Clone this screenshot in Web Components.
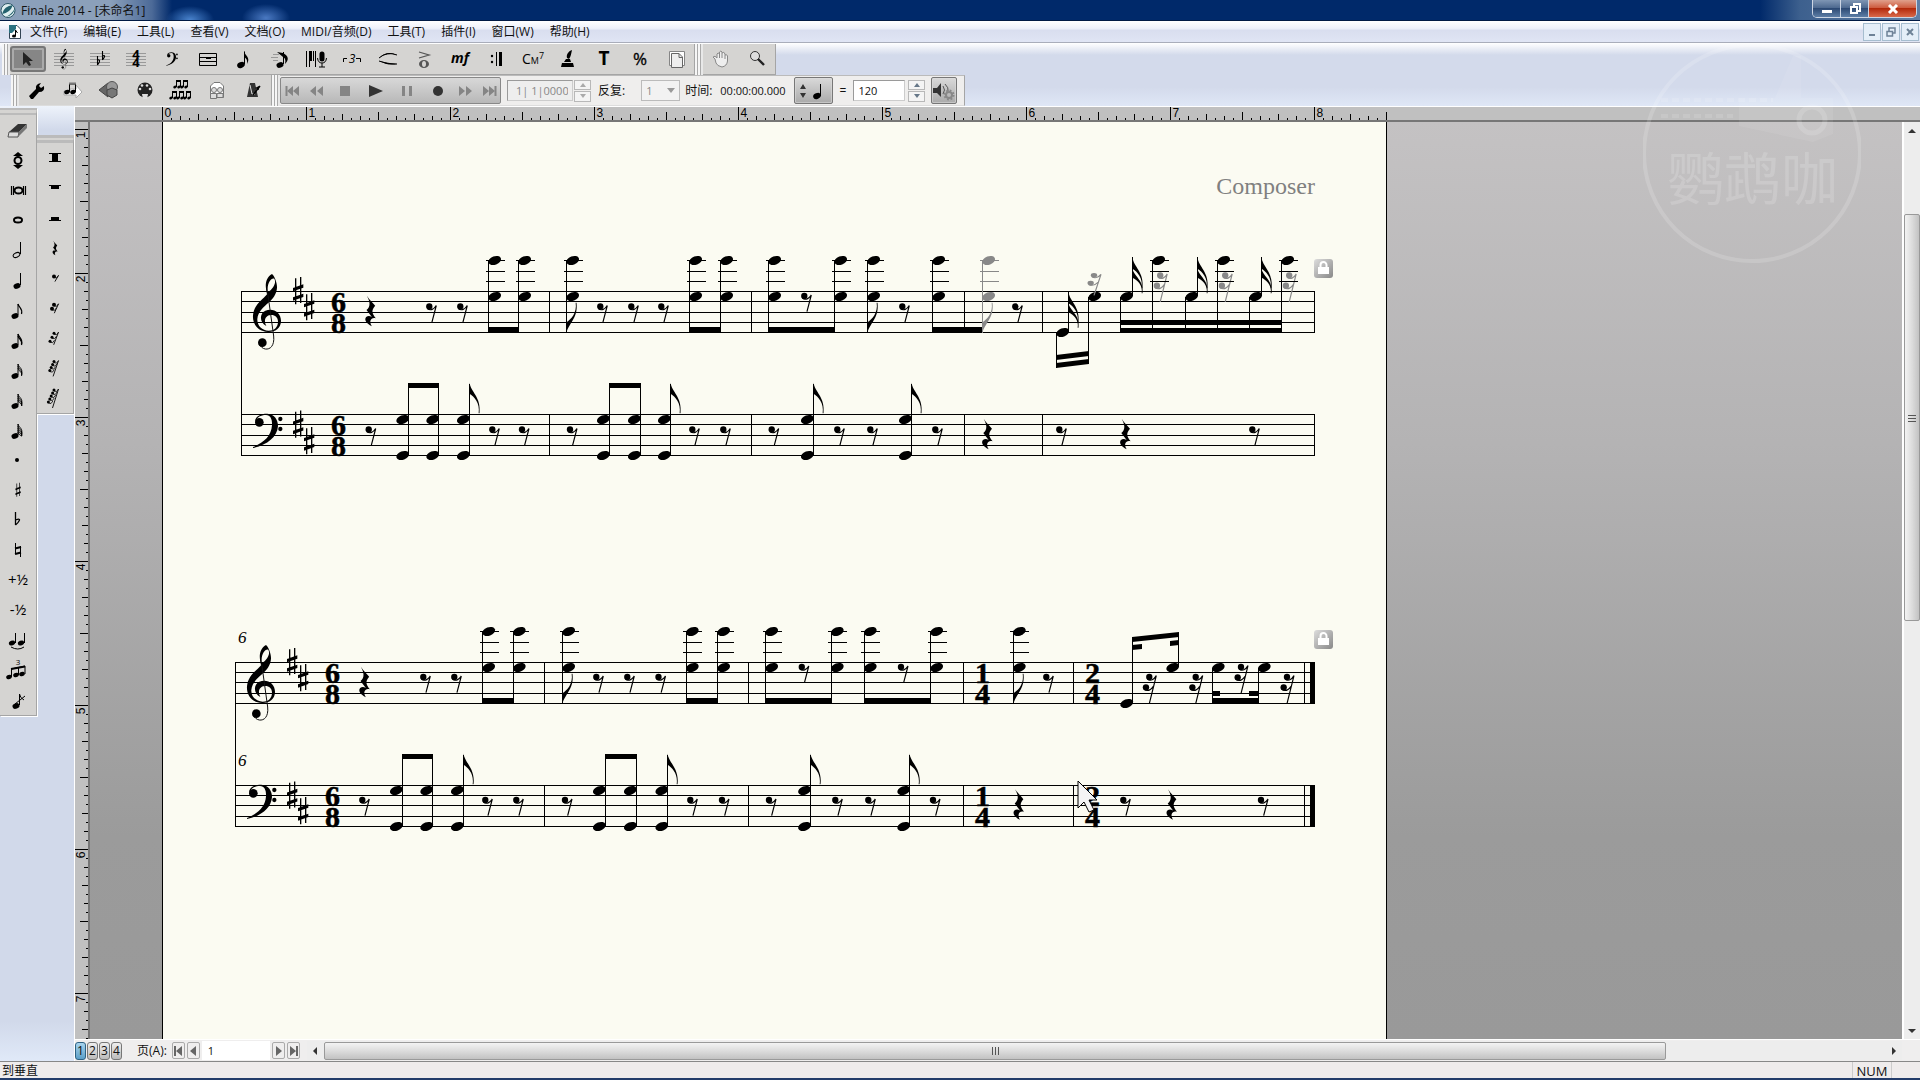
<!DOCTYPE html>
<html lang="zh-CN">
<head>
<meta charset="utf-8">
<title>Finale 2014 - [未命名1]</title>
<style>
html,body{margin:0;height:100%}
body{font:12px/16px "Open Sans","Noto Sans CJK SC",sans-serif;color:#111;overflow:hidden;background:#d3daeb}
</style>
</head>
<body>
<finale-app></finale-app>
<script>
/* ---------- helper ---------- */
function define(name, css, html) {
  customElements.define(name, class extends HTMLElement {
    connectedCallback() {
      if (this.shadowRoot) return;
      const t = document.createElement('template');
      t.innerHTML = '<style>*{box-sizing:border-box}button,input,select{font:inherit;color:inherit;margin:0;padding:0;border:0;background:none}svg{display:block;flex:none}' + css + '</style>' +
        (typeof html === 'function' ? html(this) : html);
      this.attachShadow({ mode: 'open' }).append(t.content.cloneNode(true));
    }
  });
}

/* ---------- music glyph shapes (three units per pixel) ---------- */
const TREBLE = '<path fill-rule="evenodd" d="M139 258C120 250 116 222 136 212C160 202 184 218 183 244C182 266 164 277 144 276C114 275 97 252 99 226C101 205 112 190 128 176C134 171 138 167 141 163C135 140 134 115 156 102C162 106 172 128 171 143C170 162 158 177 147 187C130 202 114 215 112 237C111 257 126 271 146 272C162 272 174 262 174 245C174 231 164 224 152 225C136 226 130 242 139 258ZM144 157C160 146 170 128 163 116C153 112 139 132 144 157Z"/><path fill="none" stroke="currentColor" stroke-width="3" d="M143 158L161 288C164 318 150 329 136 327C128 326 122 320 118 313"/><circle cx="127" cy="308" r="13"/>';
const BASS = '<path d="M106 546C104 530 120 521 142 521C164 522 174 540 174 558C172 592 140 615 99 624L99 621C132 608 154 588 156 556C157 538 152 526 138 525C122 525 110 533 110 540Z"/><circle cx="118" cy="547" r="13"/><circle cx="181" cy="537" r="6.500"/><circle cx="181" cy="567" r="6.500"/>';
const QREST = '<path d="M-11 -46C-2 -32 8 -24 14 -16C2 -2 4 6 16 22C2 18 -6 30 4 46C-12 38 -20 26 -13 18C-8 14 -2 14 4 18L-12 -3C1 -14 -1 -28 -11 -46Z"/>';
const EREST = '<circle r="9.500"/><path fill="none" stroke="currentColor" stroke-width="3.500" d="M-6 6C4 14 14 8 21 -3L8 47"/>';
const SREST = '<circle r="9.500"/><circle cx="-10" cy="31" r="9.500"/><path fill="none" stroke="currentColor" stroke-width="3.500" d="M-6 6C4 14 14 8 21 -4L0 80M-16 37C-4 45 5 38 12 28"/>';
const SHARP = '<path d="M-9 -38H-5V40H-9ZM6 -42H10V36H6ZM-15 -9L16 -20V-10L-15 1ZM-15 19L16 8V18L-15 29Z"/>';
const FLAG = '<path d="M0 0C3 28 36 44 30 92H27.500C32 62 14 42 0 34Z"/>';

/* ---------- icons, 30 x 26 ---------- */
const head = (x, y, s = 1) => `<ellipse cx="${x}" cy="${y}" rx="${3.6 * s}" ry="${2.6 * s}" transform="rotate(-22 ${x} ${y})"/>`;
const L = (d, w = 1, c = 'currentColor') => `<path fill="none" stroke="${c}" stroke-width="${w}" d="${d}"/>`;
const put = (g, x, y, s, cx = 0, cy = 0) => `<g transform="translate(${x} ${y}) scale(${s}) translate(${-cx} ${-cy})">${g}</g>`;
const staff = L('M5 7.500H25M5 10.500H25M5 13.500H25M5 16.500H25M5 19.500H25', 1, '#999');
const T = (t, x, y, size, more = '') => `<text x="${x}" y="${y}" font-size="${size}" text-anchor="middle" ${more}>${t}</text>`;
const flags = n => { let s = head(12, 19) + L('M15 18V7'); for (let i = 0; i < n; i++) s += L(`M15 ${7 + i * 2}C16 ${11 + i * 2} 20 ${11 + i * 2} 18.500 ${17 + (i > 2 ? 2 : i)}`, n > 2 ? 1 : 1.2); return s; };
const rests = n => { let s = ''; for (let i = 0; i < n; i++) { const x = 18 - i * (n > 3 ? 1.4 : 2), y = 13 - n * 1.6 + i * (n > 3 ? 3 : 4); s += `<circle cx="${x - 4}" cy="${y}" r="${n > 2 ? 1.5 : 2}"/>` + L(`M${x - 4} ${y + 1}Q${x - 1} ${y + 3} ${x + .5} ${y - 1}`, .8); } return s + L(`M18.500 ${12 - n * 1.6}L${15.5 - n * .6} ${15 + n * 1.6}`, .9); };
const G = '#858585';
const ICONS = {
  arrow: '<path d="M10 6V19L13 16L16 20L18 19L16 15H20Z" fill="#222"/>',
  clef: staff + put(TREBLE, 15, 13, .09, 141, 215),
  key: staff + L('M12.500 10V19M12 14Q17 13 12.500 19M17.500 5V14M17 10Q22 8 17.500 14', 1.1),
  meter: staff + T('4', 15, 13, 13, 'font-family="Liberation Serif" font-weight="700"') + T('4', 15, 21, 13, 'font-family="Liberation Serif" font-weight="700"'),
  bass: put(BASS, 15, 13, .13, 143, 572),
  measure: L('M6.500 7.500H23.500V19.500H6.500ZM6 11.500H24M6 15.500H24') + '<path d="M13 11H18V13H13Z"/>',
  note: head(12, 19, 1.1) + L('M15.500 18V5.500') + '<path d="M15 5C16 10 22 11 18 18C19 13 16 12 15 11Z"/>',
  speedy: L('M8 8.500H14M6 11.500H13M8 14.500H13', 1, '#999') + head(15, 19) + L('M18.500 18V6', 1) + '<path d="M12 6L18 7C24 10 24 14 20 18C21 14 20 12 18 11Z"/>',
  hyper: L('M5.500 5V21M8.500 5V14M8.500 14V21M14.500 5V21') + '<path d="M9 5H11V15H9ZM12 5H13V15H12ZM18.500 8A2.500 2.500 0 0 1 23.500 8V13A2.500 2.500 0 0 1 18.500 13Z"/>' + L('M16.500 12Q17 17 21 17Q25 17 25.500 12M21 17V21M18 21H24'),
  tuplet: T('3', 15, 17, 12, 'font-family="Liberation Serif" font-style="italic"') + L('M6.500 16V12.500H10M19 12.500H23.500V16'),
  slur: '<path d="M6 12Q14 4 24 9Q14 6 6 12ZM6 15Q15 20 24 18Q15 17 6 15Z"/>' + L('M6 12Q14 5 24 9M6 15Q15 19 24 18'),
  artic: L('M10 6L20 9L10 12', 1.3, '#555') + '<path fill-rule="evenodd" fill="#555" d="M15 14A5 4 0 1 0 15 22A5 4 0 1 0 15 14ZM15 15A2 3 0 1 1 15 21A2 3 0 1 1 15 15Z"/>',
  dyn: T('mf', 15, 17, 14, 'font-family="Liberation Serif" font-style="italic" font-weight="700"'),
  repeat: L('M15.500 6V20') + '<path d="M18 6H21V20H18Z"/><circle cx="11" cy="10" r="1.200"/><circle cx="11" cy="16" r="1.200"/>',
  chord: '<text x="5" y="18" font-size="14" font-family="Open Sans">C<tspan font-size="9">M</tspan><tspan font-size="9" dy="-5">7</tspan></text>',
  lyric: '<path d="M9 17H20L21 21H8ZM13 13H17L18 16H11ZM14 12C13 8 16 5 19 4C18 8 18 10 16 13Z"/>',
  text: T('T', 15, 19, 19, 'font-family="Liberation Serif" font-weight="700"'),
  percent: T('%', 15, 19, 17, 'font-family="Liberation Serif" stroke="currentColor" stroke-width=".3"'),
  page: `<path d="M8.500 5.500H23.500V19.500H8.500Z" fill="#fff" stroke="${G}"/><path d="M10.500 7.500H18L21.500 11V21.500H10.500Z" fill="#eee" stroke="#666"/>` + L('M18 7.500V11.500H22', 1, '#666'),
  hand: '<path d="M9 13L7 11Q9 9 11 12V8Q12 6 13.500 8V6Q15 4 16 6V7Q18 5 19 8V9Q21 8 21.500 10V15Q21 20 16 21Q11 20 10 17Z" fill="#eee" stroke="#888"/>' + L('M13.500 8V12M16 7V12M19 9V13', 1, '#888'),
  zoom: '<circle cx="13" cy="10" r="4.500" fill="#ddd" stroke="#333"/>' + L('M16 13L22 19', 2.4, '#222'),
  wrench: '<path d="M9 22L7 19L14 12Q13 7 19 6L17 9L19 11L22 9Q23 15 17 15L11 22Z"/>',
  export: '<path d="M12 12H18V8L24 15L18 21V18H6V14H12Z" fill="#fff" stroke="#aaa"/>' + head(9, 15, .8) + head(15, 15, .8) + L('M11.500 15V7H17.500V15') + L('M11 6.500H18', 2, '#777'),
  shapes: '<path d="M5 13L14 6V20Z" fill="#666" stroke="#444"/><circle cx="18" cy="10" r="5.500" fill="#999" stroke="#555"/><path d="M18 11L23 13V18L18 21L13 18V13Z" fill="#777" stroke="#444"/>',
  palette: '<circle cx="15" cy="13" r="7.500" fill="#222"/><g fill="#ddd"><circle cx="10" cy="12" r="1.300"/><circle cx="12" cy="8.500" r="1.300"/><circle cx="17" cy="8.500" r="1.300"/><circle cx="20" cy="12" r="1.300"/><path d="M12 17H18L17 22H13Z"/></g>',
  notes2: [[9, 10], [16, 10], [5, 21], [12, 21], [19, 21]].map(([x, y]) => head(x, y, .5) + head(x + 4, y, .5) + L(`M${x + 1.5} ${y}V${y - 6}H${x + 5.5}V${y}`) + L(`M${x + 1} ${y - 6}H${x + 6}`, 2)).join(''),
  band: '<path d="M8.500 21.500V9L12 5.500H18L21.500 9V20.500H15" fill="#fff" stroke="#777"/><circle cx="12" cy="13" r="2.500" fill="#ddd" stroke="#777"/><circle cx="18" cy="13" r="2.500" fill="#ddd" stroke="#777"/><path d="M8.500 16.500H14.500V21.500H8.500ZM15 16.500H21V20.500H15Z" fill="#ddd" stroke="#777"/>',
  metro: '<path d="M12 6H17L20 20H9Z" fill="#333"/>' + L('M12 8L14 17H17', 1, '#ddd') + L('M15 18L22 9', 1.500) + '<path d="M17 11L21 9V13Z"/>',
  first: L('M8.500 8V18', 2, G) + `<path fill="${G}" d="M15 8V18L9 13ZM21 8V18L15 13Z"/>`,
  rew: `<path fill="${G}" d="M14 8V18L8 13ZM21 8V18L15 13Z"/>`,
  stop: `<path fill="${G}" d="M10 8H20V18H10Z"/>`,
  play: '<path fill="#333" d="M8 7L22 13L8 19Z"/>',
  pause: `<path fill="${G}" d="M10 8H13V18H10ZM17 8H20V18H17Z"/>`,
  rec: '<circle cx="15" cy="13" r="5" fill="#333"/>',
  fwd: `<path fill="${G}" d="M9 8V18L15 13ZM16 8V18L22 13Z"/>`,
  last: L('M21.500 8V18', 2, G) + `<path fill="${G}" d="M9 8V18L15 13ZM15 8V18L21 13Z"/>`,
  tempo: '<path fill="#333" d="M2 11L5 6L8 11ZM2 15L5 20L8 15Z"/>' + head(19, 18, 1.1) + L('M22.500 18V6'),
  speaker: '<path fill="#333" d="M4 10H8L12 5V19L8 15H4Z"/>' + L('M14 8Q17 12 14 16M16 6Q20 10 19 13', 1, '#555') + '<circle cx="20" cy="17" r="3" fill="none" stroke="#888" stroke-width="2"/><circle cx="20" cy="17" r="4.500" fill="none" stroke="#888" stroke-width="2" stroke-dasharray="1.800 1.740"/>',
  eraser: '<path d="M6 15L15 7H24L16 15Z" fill="#333"/><path d="M6 15H16L15 20H5Z" fill="#ddd" stroke="#555"/><path d="M16 15L24 7V11L15 20Z" fill="#777"/>',
  updown: '<path d="M10 9L15 5L20 9ZM10 18L15 22L20 18Z"/><circle cx="15" cy="13.500" r="3.500" fill="none" stroke="currentColor" stroke-width="2"/>',
  breve: L('M8.500 9V18M10.500 9V18M20.500 9V18M22.500 9V18', 1.200) + '<ellipse cx="15.500" cy="13.500" rx="4" ry="3" fill="none" stroke="currentColor" stroke-width="2"/>',
  whole: '<ellipse cx="15" cy="13" rx="4" ry="2.500" fill="none" stroke="currentColor" stroke-width="2"/>',
  half: '<ellipse cx="13.500" cy="18" rx="3.500" ry="2.200" fill="none" stroke="currentColor" transform="rotate(-25 13.500 18)"/>' + L('M17.500 17V5'),
  quarter: head(14, 19) + L('M17.500 18V6'),
  n8: flags(1), n16: flags(2), n32: flags(3), n64: flags(4), n128: flags(5),
  dot: '<circle cx="14" cy="13" r="2"/>',
  sharp: put(SHARP, 15, 13, .17),
  flat: L('M12.500 5V18M12.500 13Q18 11 16 14Q15 16 12.500 18', 1.300),
  natural: L('M12.500 6V17M17.500 9V20') + L('M12 11.500L18 10M12 17L18 15.500', 2.200),
  plus: T('+½', 15, 18, 15), minus: T('-½', 15, 18, 15),
  tie: head(9, 16, .9) + head(18, 16, .9) + L('M12.500 16V6M21.500 16V6M8 20Q15 24 21 20'),
  tri: head(6, 20, .8) + head(13, 18, .8) + head(19, 17, .8) + L('M8.500 20V12L22 9V17M15.500 18V11') + L('M8 12L22 9.500', 2) + T('3', 15, 8, 8),
  grace: head(13, 19) + L('M16.500 18V7Q17 11 21 13M12 17L22 9'),
  rbreve: L('M9 8.500H21M9 16.500H21') + '<path d="M12 8H18V17H12Z"/>',
  rwhole: L('M9 10.500H21') + '<path d="M11 11H19V14H11Z"/>',
  rhalf: L('M9 15.500H21') + '<path d="M11 12H19V15H11Z"/>',
  rq: put(QREST, 15, 13, .16),
  r8: rests(1), r16: rests(2), r32: rests(3), r64: rests(4), r128: rests(5)
};

define('tool-button', `
:host{display:flex;width:36px;height:30px}
:host([tall]){width:100%;height:30px}
:host([small]){width:24px}:host([mid]){width:31px}:host([small]),:host([mid]){height:26px}
:host([boxed]){height:27px}:host([boxed]) button{border:1px solid #777;border-radius:2px;background:linear-gradient(#d9d9d9,#aaa);box-shadow:inset 0 0 0 1px #ddd8}
:host([wide]){width:39px}:host([box]){width:26px}
:host([on]) button{margin:2px 0;border:2px solid #777;border-radius:3px;background:#868686;box-shadow:inset 0 0 0 2px #aaa}
button{flex:1;display:flex;justify-content:center;align-items:center;overflow:hidden;color:#000}
text{fill:currentColor;font-family:"Open Sans",sans-serif}`,
  el => `<button type="button" aria-label="${el.getAttribute('icon')}"><svg width="30" height="26" viewBox="0 0 30 26" fill="currentColor">${ICONS[el.getAttribute('icon')]}</svg></button>`);
const btns = (names, attr = '') => names.split(' ').map(n => `<tool-button icon="${n}" ${attr}></tool-button>`).join('');

define('spin-buttons', `
:host{display:flex;flex-direction:column;width:17px;height:22px;gap:1px}
button{flex:1;border:1px solid #b8b8b8;background:#f4f4f4;display:flex;align-items:center;justify-content:center;color:#678}
:host([dim]) button{color:#aaa}`,
  `<button type="button" aria-label="+"><svg width="6" height="4"><path d="M0 4L3 0L6 4Z" fill="currentColor"/></svg></button><button type="button" aria-label="-"><svg width="6" height="4"><path d="M0 0L3 4L6 0Z" fill="currentColor"/></svg></button>`);

define('tool-grip', `:host{display:block;width:8px;align-self:stretch;background:linear-gradient(90deg,#f6f6f6 0 2px,#aaa 2px 3px,#f6f6f6 3px 5px,#aaa 5px 6px,#e8e8e8 6px)}`, '');

define('title-bar', `
:host{display:flex;height:21px;align-items:flex-start;background:radial-gradient(ellipse 24px 14px at 190px 20px,#4a84ce,#4a84ce00),radial-gradient(ellipse 24px 14px at 266px 18px,#4a79c2,#4a79c200),linear-gradient(90deg,#8ba0ba 0,#8ba0ba 110px,#4c6a98 152px,#00296a 172px,#00296a 1760px,#3d608e 1800px,#5f7fa6);border-bottom:1px solid #001a44}
svg.logo{margin:2px 4px 0 0}
span{flex:1;line-height:22px;color:#111}
.win{display:flex;margin-right:3px;border:1px solid #cdd6e4;border-top:0;border-radius:0 0 5px 5px;overflow:hidden;height:18px}
.win button{width:28px;display:flex;align-items:center;justify-content:center;border-right:1px solid #cdd6e4;background:linear-gradient(#7f96b4,#49658c 50%,#2d4a74 50%,#5d7ea6)}
.win button:last-child{width:47px;border:0;background:linear-gradient(#e0a08c,#cc5538 50%,#b32a0c 50%,#d9694a)}`,
  `<svg class="logo" width="17" height="17" viewBox="0 0 17 17"><circle cx="8" cy="8.500" r="7" fill="#dfeef0" stroke="#2d5767"/><path d="M2 12Q10 11 13 3Q4 4 2 12ZM6 15Q14 13 15 6Q12 12 6 15Z" fill="#24616e"/></svg>
<span>Finale 2014 - [未命名1]</span>
<div class="win"><button type="button" aria-label="min"><svg width="12" height="10"><path d="M1 6H11V9H1Z" fill="#fff"/></svg></button><button type="button" aria-label="restore"><svg width="12" height="12" fill="none" stroke="#fff" stroke-width="2"><path d="M5 3V1H11V8H9M2 4H8V10H2Z"/></svg></button><button type="button" aria-label="close"><svg width="12" height="10"><path d="M2 1L10 9M10 1L2 9" stroke="#fff" stroke-width="3"/></svg></button></div>`);

define('menu-bar', `
:host{display:flex;height:22px;align-items:center;background:linear-gradient(#fff,#eef1fa 35%,#d9deef 45%,#e0e5f4);border-bottom:1px solid #a9adba;padding-left:8px}
nav{display:flex;flex:1}
nav button{padding:0 8px;line-height:20px;color:#111}
.mdi{display:flex;gap:1px;margin-right:1px}
.mdi button{width:18px;height:18px;border:1px solid #a6bdcf;background:#e4eef8;display:flex;align-items:center;justify-content:center;color:#6e8297}`,
  `<svg width="14" height="16" viewBox="0 0 14 16"><path d="M1.500 1.500H9L12.500 5V14.500H1.500Z" fill="#fff" stroke="#345"/><path d="M1 1H8V5L4 9H1Z" fill="#2a7180"/><ellipse cx="6" cy="12" rx="2" ry="1.500"/><path d="M7.500 12V6L9.500 9" fill="none" stroke="#000"/></svg>
<nav>${'文件(F) 编辑(E) 工具(L) 查看(V) 文档(O) MIDI/音频(D) 工具(T) 插件(I) 窗口(W) 帮助(H)'.split(' ').map(t => `<button type="button">${t}</button>`).join('')}</nav>
<div class="mdi"><button type="button" aria-label="min"><svg width="10" height="10"><path d="M2 7H8V9H2Z" fill="currentColor"/></svg></button><button type="button" aria-label="restore"><svg width="10" height="10" fill="none" stroke="currentColor" stroke-width="1.500"><path d="M3 4V1H9V6H7M1 4.500H6.500V9H1Z"/></svg></button><button type="button" aria-label="close"><svg width="10" height="10"><path d="M2 2L8 8M8 2L2 8" stroke="currentColor" stroke-width="2"/></svg></button></div>`);

define('tool-bars', `
:host{display:block;height:63px;padding-top:1px;background:linear-gradient(#fff,#d3daeb 12px,#d3daeb 44px,#dfe7f6);font-size:11px}
.row{display:flex;align-items:center;height:31px}
.set{display:flex;align-items:center;height:31px;background:#d5d4d2;border-right:1px solid #a5a5a5;border-bottom:1px solid #a5a5a5}
.one{padding-left:2px}
.two{padding-left:11px}
.two .set{border-bottom-color:#ddd}
.play{background:#efeeed;padding:0 7px 0 0;border-top:1px solid #bbb}
.trans{display:flex;height:27px;border:1px solid #888;border-radius:2px;background:linear-gradient(#d8d8d8,#b8b8b8);width:221px;align-items:center}
.box{height:21px;border:1px solid #9a9a9a;border-right-color:#ccc;border-bottom-color:#ccc;background:#fff;padding:0 4px}
.box:disabled{background:#eee;color:#888;padding-left:8px}
.count{width:66px;margin:0 1px 0 6px}
.rep{width:39px;margin:0 5px 0 16px;display:grid;align-items:center}
.rep>*{grid-area:1/1}.rep svg{justify-self:end;margin-right:5px}
select.box{appearance:none;width:39px;border:1px solid #bbb;padding-left:4px}
select.box:disabled{background:#f2f2f2;padding-left:4px;opacity:1}
label,output{white-space:nowrap}
label{font-size:12px}
.after{margin-left:7px}
output{margin:0 8px}
.eq{margin:0 7px}
.tempo{width:52px;margin-right:3px}
spin-buttons+tool-button{margin-left:6px}
.trans tool-button[mid]{flex:none}`,
  `<div class="row one"><tool-grip></tool-grip><div class="set"><tool-button icon="arrow" on></tool-button>${btns('clef key meter bass measure note speedy hyper tuplet slur artic dyn repeat chord lyric text percent page')}</div>
<tool-grip></tool-grip><div class="set">${btns('hand zoom')}</div></div>
<div class="row two"><tool-grip></tool-grip><div class="set">${btns('wrench export shapes palette notes2 band metro')}</div>
<tool-grip></tool-grip><div class="set play"><div class="trans">${btns('first rew', 'small')}${btns('stop play pause rec', 'mid')}${btns('fwd last', 'small')}</div>
<input class="box count" aria-label="counter" value="1| 1|0000" disabled><spin-buttons dim></spin-buttons>
<label for="rep" class="after">反复:</label><div class="rep"><select id="rep" class="box" disabled><option>1</option></select><svg width="8" height="5"><path d="M0 0H8L4 5Z" fill="#999"/></svg></div>
<label for="time">时间:</label><output id="time">00:00:00.000</output>
<tool-button icon="tempo" boxed wide></tool-button><label class="eq" for="bpm">=</label><input id="bpm" class="box tempo" value="120"><spin-buttons></spin-buttons><tool-button icon="speaker" boxed box></tool-button></div></div>`);

define('side-dock', `
:host{display:flex;width:75px;background:linear-gradient(#eef3fb,#d1d9ea 24px,#d1d9ea calc(100% - 40px),#e0e9f8);border-right:1px solid #fff;align-items:flex-start}
.pal{display:flex;flex-direction:column;background:#d5d4d2;border:solid #a5a5a5;border-width:0 1px 1px 0;box-shadow:1px 1px #fff}
.a{width:37px;border-top:7px double #bbb;margin-top:2px}
.b{width:37px;margin-top:29px;border-top:8px double #bbb}`,
  `<div class="pal a">${btns('eraser updown breve whole half quarter n8 n16 n32 n64 n128 dot sharp flat natural plus minus tie tri grace', 'tall')}</div>
<div class="pal b">${btns('rbreve rwhole rhalf rq r8 r16 r32 r64 r128', 'tall')}</div>`);

/* ---------- rulers: 144 px to the inch, ticks on sixteenths ---------- */
const tick = i => i % 16 === 0 ? 14 : i % 8 === 0 ? 8 : i % 4 === 0 ? 6 : i % 2 === 0 ? 4 : 2;
define('page-ruler', `
:host{display:block;background:#c0c0c0;overflow:hidden}
:host([dir=h]){height:16px;border-top:1px solid #fff;border-bottom:2px solid #777}
:host([dir=v]){width:15px;border-right:2px solid #777}
text{font:12px "Liberation Sans",sans-serif}path{stroke:#000;shape-rendering:crispEdges}`,
  el => {
    let d = '', t = '';
    if (el.getAttribute('dir') === 'h') {
      for (let i = 0; i <= 136; i++) { const x = 87.5 + i * 9; d += `M${x} 13V${13 - tick(i)}`; if (i % 16 === 0) t += `<text x="${x + 2}" y="10">${i / 16}</text>`; }
      return `<svg width="1320" height="13"><path d="${d}"/>${t}</svg>`;
    }
    for (let i = 0; i <= 104; i++) { const y = 7.5 + i * 9; d += `M13 ${y}H${13 - tick(i)}`; if (i % 16 === 0) t += `<text transform="translate(10 ${y + 2}) rotate(-90)" text-anchor="end">${i / 16 + 1}</text>`; }
    return `<svg width="13" height="920"><path d="${d}"/>${t}</svg>`;
  });

/* ---------- the score ---------- */
const GREY = '#888';
const nh = (x, y, c = '#000') => `<ellipse cx="${x}" cy="${y}" rx="6.600" ry="4.200" fill="${c}" transform="rotate(-20 ${x} ${y})"/>`;
const vl = (x, a, b, c = '#000') => `<path d="M${Math.floor(x) + .5} ${a}V${b}" stroke="${c}" shape-rendering="crispEdges"/>`;
const hl = (y, a, b, c = '#000') => `<path d="M${a} ${y}H${b}" stroke="${c}" shape-rendering="crispEdges"/>`;
const beam = (a, b, y1, y2 = y1) => `<path d="M${a} ${y1}L${b} ${y2}V${y2 + 5}L${a} ${y1 + 5}Z"/>`;
const T3 = 1 / 3;
const gl = (g, x, y, c = '#000', sy = T3) => `<g transform="translate(${x} ${y}) scale(${T3} ${sy})" fill="${c}" color="${c}">${g}</g>`;
const at = (g, dx, dy) => `<g transform="translate(${220 + dx} ${240 + dy}) scale(${T3})">${g}</g>`;
const ledgers = (x, t, c) => [t - 31, t - 20, t - 10].map(y => hl(y, x - 9, x + 10, c)).join('');
/* stem-down octave chord; t is the top staff line */
const chord = (x, t, c = '#000') => ledgers(x, t, c) + nh(x, t - 31, c) + nh(x, t + 5, c) + vl(x - 6.2, t - 31, t + 41, c);
const chordFlag = (x, t, c = '#000') => chord(x, t, c) + gl(FLAG, Math.floor(x - 6.2) + .5, t + 42, c, -T3);
const low = (x, t, f) => nh(x, t + 5) + nh(x, t + 41) + vl(x + 6, t + 41, t - 31) + (f ? gl(FLAG, Math.floor(x + 6) + .5, t - 32) : '');
const e = (x, y) => gl(EREST, x, y), q = (x, y) => gl(QREST, x, y);
const sixteenth = (x, y, c) => gl(SREST, x, y, c);
const meter = (a, b, x, t) => [[a, t + 20], [b, t + 41]].map(([s, y]) => `<text x="${x}" y="${y}" class="m">${s}</text>`).join('');
const doubleFlag = (x, y) => gl(FLAG, x, y) + gl(FLAG, x, y + 11, '#000', .27);
const lines = (t, a, b, offs) => offs.map(o => hl(t + o, a, b)).join('');
const lock = (x, y) => `<g transform="translate(${x} ${y})"><rect width="19" height="19" rx="3" fill="url(#lk)"/><path d="M4 8H15V15H4Z" fill="#fff"/><path d="M6.500 9V6A3 3 0 0 1 12.500 6V9" fill="none" stroke="#fff" stroke-width="2"/></g>`;
function score() {
  let s = '';
  const A = 291.5, B = 414.5, C = 662.5, Dd = 785.5;
  const o1 = [0, 10, 21, 31, 41], o2 = [0, 10, 20, 31, 41];
  s += lines(A, 241, 1315, o1) + lines(B, 241, 1315, o1) + lines(C, 235, 1315, o2) + lines(Dd, 235, 1315, o2);
  s += vl(241.5, A, B + 41) + vl(235.5, C, Dd + 41);
  for (const t of [A, B]) for (const x of [549, 751, 964, 1042, 1314]) s += vl(x, t, t + 41);
  for (const t of [C, Dd]) { for (const x of [544, 748, 963, 1073, 1304]) s += vl(x, t, t + 41); s += `<path d="M1310 ${t - .5}H1315V${t + 41.5}H1310Z"/>`; }
  s += at(TREBLE, 0, 0) + at(TREBLE, -6, 371) + at(BASS, 0, 0) + at(BASS, -6, 371);
  for (const [x, y] of [[298, 291], [309, 307], [292, 662], [303, 678], [298, 424.5], [309, 441], [292, 795.5], [303, 811]]) s += gl(SHARP, x, y);
  s += meter(6, 8, 338.5, A) + meter(6, 8, 338.5, B) + meter(6, 8, 332.5, C) + meter(6, 8, 332.5, Dd);
  for (const t of [C, Dd]) s += meter(1, 4, 982.5, t) + meter(2, 4, 1092.5, t);
  /* upper system, treble */
  s += q(370.5, 311);
  for (const x of [494.7, 524.7, 695.7, 726.7, 774.7, 840.7, 938.7]) s += chord(x, A);
  s += chordFlag(572.7, A) + chordFlag(873.7, A);
  s += beam(488, 519, 327) + beam(689, 721, 327) + beam(768, 835, 327) + beam(932, 983, 327);
  s += chordFlag(988.7, A, GREY);
  for (const x of [429.3, 460.3, 600.3, 631.3, 661.3, 902.3, 1015.3]) s += e(x, 306.5);
  s += e(804.3, 296);
  s += nh(1062.7, 332.5) + nh(1094.7, 296.5) + vl(1056, 332, 368) + vl(1068, 292, 332) + vl(1088, 297, 364) + doubleFlag(1068.5, 292);
  s += beam(1056, 1089, 355, 351) + beam(1056, 1089, 363, 359);
  s += gl(SREST, 1094, 275.3, GREY, .25);
  for (const x of [1126.7, 1191.7, 1255.7]) {
    s += nh(x, 296.5) + vl(x + 6, 257, 296) + vl(x - 6.2, 297, 332) + doubleFlag(Math.floor(x + 6) + .5, 257.5);
    const h = x + 32; s += sixteenth(h + 1.500, 275.3, GREY) + ledgers(h, A) + nh(h, A - 31) + vl(h - 6.200, A - 31, 332);
  }
  s += beam(1120, 1282, 320) + beam(1120, 1282, 328);
  /* upper system, bass */
  for (const x of [402.7, 432.7, 603.3, 634.3]) s += low(x, B);
  for (const x of [463.3, 664.3, 807.3, 905.3]) s += low(x, B, 1);
  s += beam(408, 439, 383) + beam(609, 641, 383);
  for (const x of [368.7, 492.3, 522, 570, 692.3, 723.3, 771.7, 837.3, 870.3, 935.3, 1059.3, 1252.3]) s += e(x, 429.5);
  s += q(987.3, 434) + q(1125.3, 434);
  /* lower system, treble */
  s += q(364.500, 682);
  for (const x of [488.7, 519.3, 692.3, 723.7, 771.7, 837.3, 870.3, 936.7]) s += chord(x, C);
  s += chordFlag(568.7, C) + chordFlag(1019.3, C);
  s += beam(482, 514, 698) + beam(686, 718, 698) + beam(765, 832, 698) + beam(864, 931, 698);
  for (const x of [423.3, 454.3, 596.3, 627.3, 658.5, 1046.3]) s += e(x, 677);
  s += e(801.8, 667) + e(901, 667);
  s += nh(1126.7, 703.5) + vl(1132, 637, 703) + nh(1172.7, 667.5) + vl(1178, 633, 667) + beam(1132, 1179, 637, 632) + beam(1132, 1142, 645, 644) + beam(1170, 1179, 641, 640);
  s += sixteenth(1149.3, 677) + sixteenth(1195.7, 677) + sixteenth(1241, 667) + sixteenth(1287, 677);
  s += nh(1218.3, 667.5) + vl(1212, 668, 703) + nh(1264.3, 667.5) + vl(1258, 668, 703) + beam(1212, 1259, 698) + beam(1212, 1220, 691) + beam(1249, 1259, 691);
  /* lower system, bass */
  for (const x of [396.3, 426.7, 599.3, 630.3]) s += low(x, Dd);
  for (const x of [457.3, 661.8, 804.5, 903.7]) s += low(x, Dd, 1);
  s += beam(402, 433, 754) + beam(605, 637, 754);
  for (const x of [362.3, 485.3, 516.3, 565, 690.3, 722, 769, 835.3, 868.3, 933, 1123.3, 1261]) s += e(x, 800);
  s += q(1018.7, 804.5) + q(1171.7, 804.5);
  s += '<text class="n" x="238" y="643">6</text><text class="n" x="238" y="766">6</text><text class="c" x="1315" y="194">Composer</text>';
  s += lock(1314, 259) + lock(1314, 630);
  s += '<path d="M1078 781V808L1084 802L1089 812L1094 810L1089 800H1097Z" fill="#f4f4f4" stroke="#000"/>';
  return s;
}
define('score-page', `
:host{display:block;flex:none;border:solid #000;border-width:0 1px;background:#fbfbf2}
text{fill:#000}.m{font:700 30px "Liberation Serif",serif;text-anchor:middle;stroke:#000;stroke-width:.5px}
.n{font:italic 17px "Liberation Serif",serif}.c{font:24px "Liberation Serif",serif;fill:#808080;text-anchor:end}`,
  () => `<svg width="1223" height="918" viewBox="163 122 1223 918"><defs><linearGradient id="lk" x2="1" y2="1"><stop stop-color="#ddd"/><stop offset="1" stop-color="#888"/></linearGradient></defs>${score()}</svg>`);

define('scroll-bar', `
:host{display:flex;background:#ededed;align-items:center}
:host([dir=v]){flex-direction:column;width:18px;border-left:2px solid #fff}
:host([dir=h]){flex:1;height:19px}
button{flex:none;width:17px;height:17px;display:flex;align-items:center;justify-content:center}
.pre{flex:none}.thumb{border:1px solid #999;border-radius:2px;display:flex;align-items:center;justify-content:center}
:host([dir=v]) .pre{height:75px}:host([dir=v]) .thumb{width:16px;flex:407;background:linear-gradient(90deg,#f3f3f3,#dcdcdc 50%,#c2c2c2)}
:host([dir=v]) .post{flex:402}
:host([dir=h]) .thumb{height:18px;flex:1339;background:linear-gradient(#f3f3f3,#dcdcdc 50%,#c2c2c2)}
:host([dir=h]) .post{flex:219}`,
  el => {
    const v = el.getAttribute('dir') === 'v';
    const a = v ? ['M0 6L4 2L8 6Z', 'M0 2L4 6L8 2Z'] : ['M6 0L2 4L6 8Z', 'M2 0L6 4L2 8Z'];
    const b = i => `<button type="button" aria-label="scroll"><svg width="8" height="8"><path d="${a[i]}" fill="#333"/></svg></button>`;
    return b(0) + `<div class="pre"></div><div class="thumb"><svg width="8" height="8"><path d="${v ? 'M0 1.500H8M0 4.500H8M0 7.500H8' : 'M1.500 0V8M4.500 0V8M7.500 0V8'}" stroke="#555"/></svg></div><div class="post"></div>` + b(1);
  });

define('page-bar', `
:host{display:flex;height:22px;align-items:center;background:#efeeee;border-top:1px solid #fff}
.layer{width:11px;height:18px;border:1px solid #777;border-radius:3px;background:linear-gradient(#eee,#bbb);margin-right:1px;line-height:16px;font-size:12px;text-align:center}
.layer.on{background:linear-gradient(#a8d4ee,#5b9fc8);border-color:#2d6284}
label{margin:0 5px 0 14px;white-space:nowrap}
.nav{width:13px;height:17px;border:1px solid #aaa;border-radius:2px;display:flex;align-items:center;justify-content:center;margin-right:2px}
input{width:68px;height:19px;background:#fff;padding:0 6px;margin-right:2px;font-size:11px}
scroll-bar{margin-left:5px}.corner{width:18px}`,
  () => {
    const n = (d, l) => `<button type="button" class="nav" aria-label="${l}"><svg width="9" height="10"><path d="${d}" fill="#666"/></svg></button>`;
    return `<button type="button" class="layer on">1</button><button type="button" class="layer">2</button><button type="button" class="layer">3</button><button type="button" class="layer">4</button><label for="pg">页(A):</label>` +
      n('M0 0H2V10H0ZM8 0V10L2 5Z', 'first') + n('M7 0V10L1 5Z', 'previous') + '<input id="pg" value="1">' + n('M2 0V10L8 5Z', 'next') + n('M1 0V10L7 5ZM7 0H9V10H7Z', 'last') +
      '<scroll-bar dir="h"></scroll-bar><div class="corner"></div>';
  });

define('status-bar', `
:host{display:flex;height:19px;background:#efecec;border-top:1px solid #888;border-bottom:2px solid #233c6a;line-height:18px}
span{flex:1;padding-left:2px}b{font-weight:400;width:40px;text-align:center;border:solid #ccc;border-width:0 1px;margin-right:28px;font-size:13px}`,
  '<span>到垂直</span><b>NUM</b>');

define('brand-watermark', `
:host{position:absolute;top:44px;right:59px;width:218px;height:220px;pointer-events:none}
text{font:57px "Noto Sans CJK SC",sans-serif}`,
  `<svg width="218" height="220" fill="#fff" fill-opacity=".16"><circle cx="109" cy="109" r="108" fill="none" stroke="#fff" stroke-opacity=".16" stroke-width="4"/><path fill-opacity=".08" d="M96 54H132L150 12H158V54H190V90L170 98L96 82Z"/><circle cx="169" cy="76" r="13" fill="none" stroke="#fff" stroke-opacity=".14" stroke-width="5"/><path fill="none" stroke="#fff" stroke-opacity=".12" stroke-width="4" stroke-dasharray="7 4" d="M18 56H130M18 72H90"/><text x="24" y="156">鹦鹉咖</text></svg>`);

define('finale-app', `
:host{display:flex;flex-direction:column;height:100vh;position:relative;overflow:hidden}
main{flex:1;display:flex;min-height:0}
.doc{flex:1;display:flex;flex-direction:column;min-width:0}
.view{flex:1;display:flex;min-height:0}
.desk{flex:1;min-width:0;overflow:hidden;padding-left:72px;display:flex;background:linear-gradient(#c4c2c3,#b4b3b4 35%,#9b9b9b 78%,#999)}`,
  `<title-bar></title-bar><menu-bar></menu-bar><tool-bars></tool-bars>
<main><side-dock></side-dock><div class="doc"><page-ruler dir="h"></page-ruler><div class="view"><page-ruler dir="v"></page-ruler><div class="desk"><score-page></score-page></div><scroll-bar dir="v"></scroll-bar></div><page-bar></page-bar></div></main>
<status-bar></status-bar><brand-watermark></brand-watermark>`);
</script>
</body>
</html>
